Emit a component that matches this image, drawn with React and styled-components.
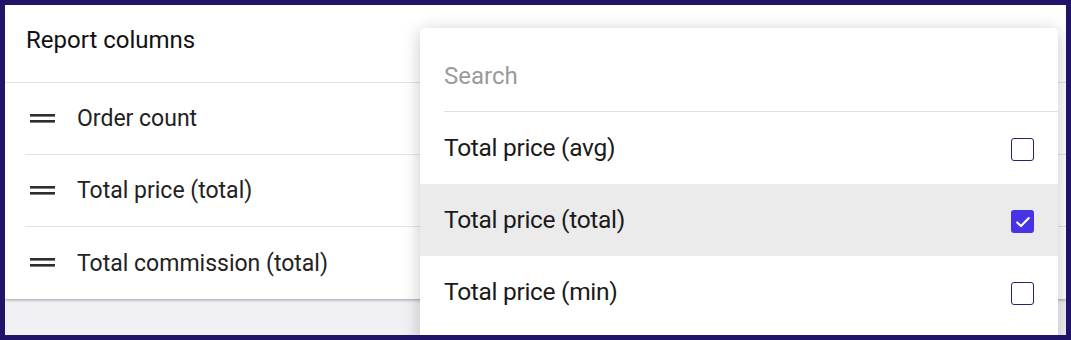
import React from "react";
import styled, { createGlobalStyle } from "styled-components";

const GlobalStyle = createGlobalStyle`
	html, body {
		margin: 0;
		padding: 0;
		background: #1f1468;
	}
	* {
		box-sizing: border-box;
	}
`;

const columns = ["Order count", "Total price (total)", "Total commission (total)"];

const options = [
	{ label: "Total price (avg)", checked: false },
	{ label: "Total price (total)", checked: true },
	{ label: "Total price (min)", checked: false },
];

function DragHandle() {
	return (
		<svg width="26" height="12" viewBox="0 0 26 12">
			<rect x="0" y="1" width="25" height="2.6" fill="#2e2e2e" />
			<rect x="0" y="7" width="25" height="2.6" fill="#2e2e2e" />
		</svg>
	);
}

function App() {
	return (
		<>
			<GlobalStyle />
			<Frame>
				<Page>
					<Card>
						<CardHeader>Report columns</CardHeader>
						<List>
							{columns.map((c) => (
								<Row key={c}>
									<Handle>
										<DragHandle />
									</Handle>
									<RowLabel>{c}</RowLabel>
								</Row>
							))}
						</List>
					</Card>
				</Page>
				<Popup>
					<SearchBox>
						<SearchInput placeholder="Search" />
					</SearchBox>
					{options.map((o) => (
						<Option key={o.label} active={o.checked}>
							<OptionLabel>{o.label}</OptionLabel>
							<Checkbox checked={o.checked}>
								{o.checked && (
									<svg width="18" height="18" viewBox="0 0 18 18">
										<path
											d="M3.2 9.4l3.8 3.7L14.8 5"
											fill="none"
											stroke="#fff"
											strokeWidth="2.1"
											strokeLinecap="round"
											strokeLinejoin="round"
										/>
									</svg>
								)}
							</Checkbox>
						</Option>
					))}
				</Popup>
			</Frame>
		</>
	);
}

export default App;

const Frame = styled.div`
	position: relative;
	width: 1071px;
	height: 340px;
	border: 5px solid #1f1468;
	overflow: hidden;
	font-family: Roboto, "Liberation Sans", sans-serif;
`;

const Page = styled.div`
	height: 100%;
	background: #f0f0f5;
`;

const Card = styled.div`
	background: #fff;
	box-shadow: 0 1px 3px rgba(0, 0, 0, 0.35);
`;

const CardHeader = styled.div`
	height: 78px;
	display: flex;
	align-items: center;
	padding: 0 21px 8px;
	font-size: 24px;
	color: #111;
	border-bottom: 1px solid #e1e1ea;
`;

const List = styled.div`
	padding-left: 20px;
`;

const Row = styled.div`
	height: 72px;
	display: flex;
	align-items: center;
	border-bottom: 1px solid #e3e3e3;

	&:last-child {
		border-bottom: none;
	}
`;

const Handle = styled.div`
	width: 52px;
	padding-left: 5px;
	display: flex;
	align-items: center;
`;

const RowLabel = styled.span`
	font-size: 23px;
	color: #222;
`;

const Popup = styled.div`
	position: absolute;
	left: 415px;
	top: 23px;
	width: 638px;
	height: 340px;
	background: #fff;
	border-radius: 5px;
	box-shadow: 0 3px 18px rgba(0, 0, 0, 0.22);
`;

const SearchBox = styled.div`
	height: 84px;
	margin-left: 24px;
	display: flex;
	align-items: center;
	border-bottom: 1px solid #e0e0e0;
	padding-top: 13px;
`;

const SearchInput = styled.input`
	border: none;
	outline: none;
	width: 100%;
	font-family: inherit;
	font-size: 24px;
	color: #222;
	background: transparent;
	padding: 0;

	&::placeholder {
		color: #9a9a9a;
	}
`;

const Option = styled.div`
	height: 72px;
	display: flex;
	align-items: center;
	justify-content: space-between;
	padding: 0 24px;
	background: ${(p) => (p.active ? "#ebebeb" : "#fff")};
`;

const OptionLabel = styled.span`
	font-size: 24.5px;
	letter-spacing: -0.3px;
	color: #1a1a1a;
	margin-top: -1px;
`;

const Checkbox = styled.span`
	width: 23px;
	height: 23px;
	border-radius: 3px;
	border: ${(p) => (p.checked ? "none" : "1.5px solid #2b2069")};
	background: ${(p) => (p.checked ? "#4733e6" : "#fff")};
	display: flex;
	align-items: center;
	justify-content: center;
	margin-top: 3px;
`;
